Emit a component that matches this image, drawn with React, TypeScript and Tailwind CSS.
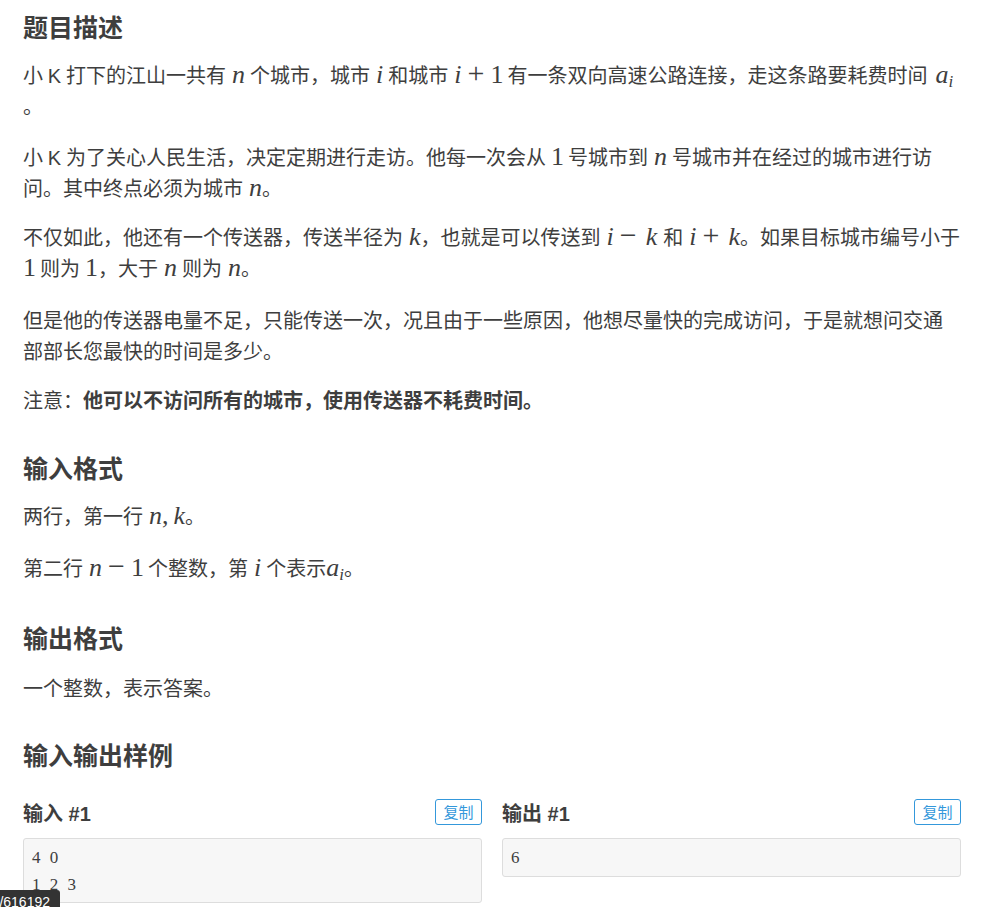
import type { ReactNode } from "react";

const serif = "font-['Liberation_Serif',serif] text-[26px] leading-[0]";

const Mi = ({ children, start, end }: { children: ReactNode; start?: boolean; end?: boolean }) => (
  <span className={`${serif} italic ${start ? "ml-[3px]" : "ml-[6px]"} ${end ? "" : "mr-[5px]"}`}>
    {children}
  </span>
);

const Mn = ({ children, start, end }: { children: ReactNode; start?: boolean; end?: boolean }) => (
  <span className={`${serif} ${start ? "" : "ml-[5px]"} ${end ? "" : "mr-[4px]"}`}>
    {children}
  </span>
);

const Ai = ({ spaced }: { spaced?: boolean }) => (
  <span className={`${serif} italic ${spaced ? "ml-[8px]" : ""}`}>
    a<sub className="text-[17px] leading-[0]">i</sub>
  </span>
);

const Op = ({ children }: { children: string }) => (
  <span className="inline-block w-[19px] text-center mx-[5px] font-['Liberation_Serif',serif] text-[30px] leading-[0]">
    {children}
  </span>
);

const Sample = ({ title, lines, h }: { title: string; lines: string[]; h: string }) => (
  <div className="w-[459px]">
    <div className="flex items-center justify-between h-[26px]">
      <h3 className="text-[20px] font-bold leading-none mt-[4px]">{title}</h3>
      <button className="h-[26px] w-[47px] border border-[#3498db] rounded-[3px] text-[15px] leading-none text-[#3498db]">
        复制
      </button>
    </div>
    <pre className={`mt-[13px] ${h} border border-[#ddd] rounded-[3px] bg-[#f7f7f7] px-[8px] py-[5px] font-['Liberation_Serif',serif] text-[17px] tracking-[0.5px] [word-spacing:4px] leading-[27px]`}>
      {lines.join("\n")}
    </pre>
  </div>
);

export default function App() {
  return (
    <div className="relative h-[907px] overflow-hidden bg-white text-[#3e3e3e] font-['Liberation_Sans','Noto_Sans_CJK_SC',sans-serif]">
      <div className="pl-[23px] pr-[26px] text-[20px] leading-[31px] whitespace-nowrap">
        <h2 className="text-[25px] font-bold leading-[32px] pt-[12px]">题目描述</h2>

        <p className="mt-[17px]">
          小<span className="mx-[-0.7px]"> K </span>打下的江山一共有<Mi>n</Mi>个城市，城市<Mi>i</Mi>和城市<Mi end>i</Mi><Op>+</Op><Mn start>1</Mn>有一条双向高速公路连接，走这条路要耗费时间<Ai spaced />
          <br />。
        </p>
        <p className="mt-[20px]">
          小<span className="mx-[-0.7px]"> K </span>为了关心人民生活，决定定期进行走访。他每一次会从<Mn>1</Mn>号城市到<Mi>n</Mi>号城市并在经过的城市进行访
          <br />问。其中终点必须为城市<Mi end>n</Mi>。
        </p>
        <p className="mt-[18px]">
          不仅如此，他还有一个传送器，传送半径为<Mi end>k</Mi>，也就是可以传送到<Mi end>i</Mi><Op>−</Op><Mi start end>k</Mi><span className="ml-[6px]">和</span><Mi end>i</Mi><Op>+</Op><Mi start end>k</Mi>。如果目标城市编号小于
          <br /><Mn start>1</Mn>则为<Mn end>1</Mn>，大于<Mi>n</Mi>则为<Mi end>n</Mi>。
        </p>
        <p className="mt-[21px]">
          但是他的传送器电量不足，只能传送一次，况且由于一些原因，他想尽量快的完成访问，于是就想问交通
          <br />部部长您最快的时间是多少。
        </p>
        <p className="mt-[18px]">
          注意：<strong className="font-bold">他可以不访问所有的城市，使用传送器不耗费时间。</strong>
        </p>

        <h2 className="text-[25px] font-bold leading-[32px] mt-[36px]">输入格式</h2>
        <p className="mt-[17px]">
          两行，第一行<Mi end>n<span className="not-italic mr-[5px]">,</span>k</Mi>。
        </p>
        <p className="mt-[21px]">
          第二行<Mi end>n</Mi><Op>−</Op><Mn start>1</Mn>个整数，第<Mi>i</Mi>个表示<Ai />。
        </p>

        <h2 className="text-[25px] font-bold leading-[32px] mt-[38px]">输出格式</h2>
        <p className="mt-[19px]">一个整数，表示答案。</p>

        <h2 className="text-[25px] font-bold leading-[32px] mt-[35px]">输入输出样例</h2>

        <div className="mt-[27px] flex gap-[20px]">
          <Sample title="输入 #1" lines={["4 0", "1 2 3"]} h="h-[65px]" />
          <Sample title="输出 #1" lines={["6"]} h="h-[39px]" />
        </div>
      </div>

      <div className="absolute left-0 bottom-0 h-[17px] w-[60px] overflow-hidden rounded-tr-[3px] bg-[#333] text-white text-[14px] leading-[24px] flex justify-end pr-[10px] whitespace-nowrap">
        /616192
      </div>
    </div>
  );
}
